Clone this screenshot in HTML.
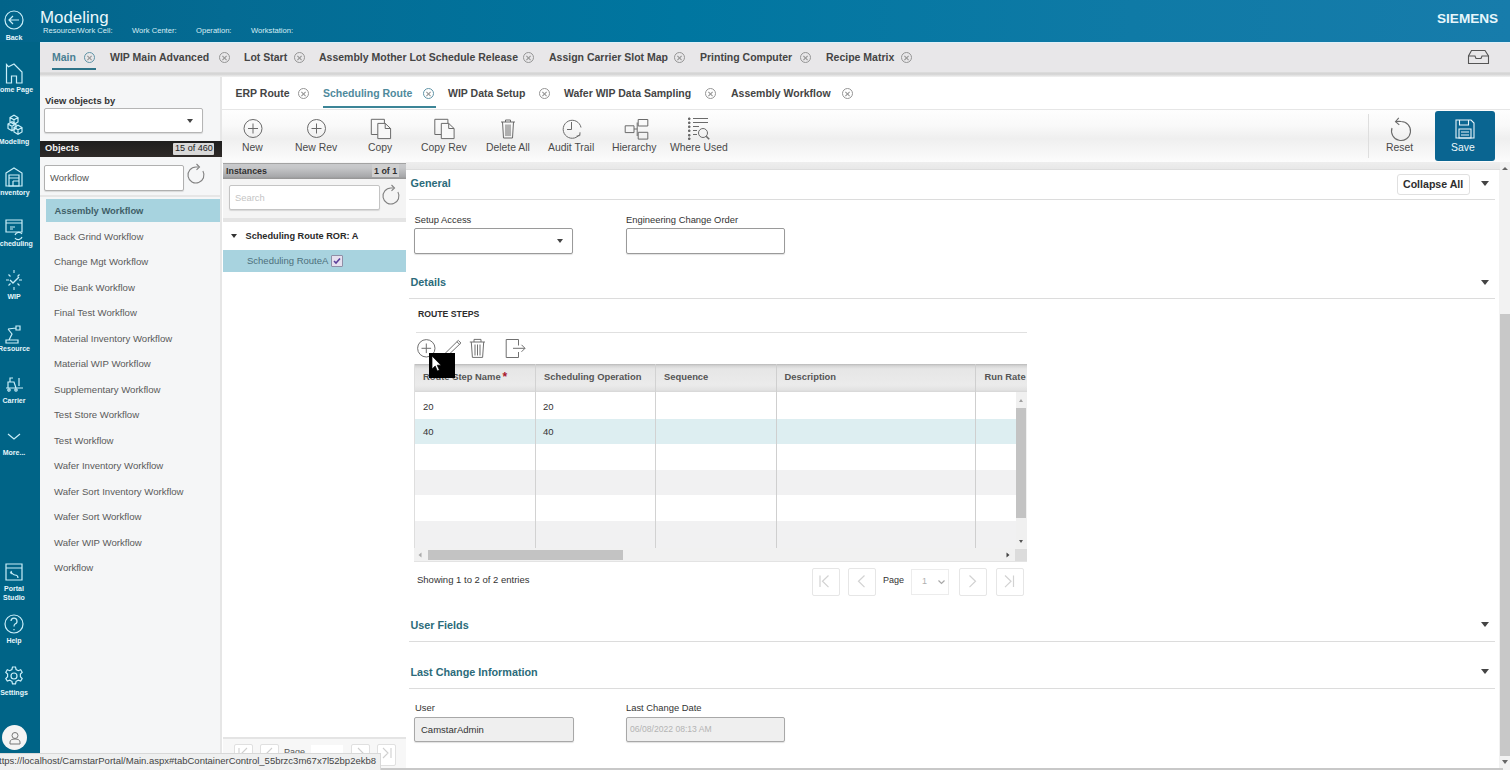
<!DOCTYPE html>
<html><head><meta charset="utf-8">
<style>
*{box-sizing:border-box;margin:0;padding:0}
html,body{width:1510px;height:770px;overflow:hidden;background:#fff;font-family:"Liberation Sans",sans-serif;color:#333}
.a{position:absolute}
.t{position:absolute;white-space:nowrap;line-height:1}
svg{position:absolute;overflow:visible}
#hdr{left:0;top:0;width:1510px;height:42px;background:linear-gradient(90deg,#02648a 0%,#046b93 15%,#0076a0 45%,#0f7aa6 75%,#177cab 100%)}
#side{left:0;top:42px;width:40px;height:728px;background:#006487}
#tabs{left:40px;top:42px;width:1470px;height:31px;background:#e8e7e9;border-top:1px solid #dff0f8}
#tabshadow{left:40px;top:72px;width:1470px;height:5px;background:linear-gradient(#dedede,#d2d2d2 40%,#f3f3f3)}
#leftp{left:40px;top:77px;width:182px;height:693px;background:#f5f6f7;border-right:2px solid #e6e6e6}
#subtabs{left:222px;top:77px;width:1288px;height:33px;background:#fff;border-bottom:1px solid #e6e6e6}
#toolbar{left:222px;top:110px;width:1288px;height:52px;background:linear-gradient(#fefefe,#f9f9f9 30%,#efefef 55%,#f6f6f6 80%,#fcfcfc)}
#instp{left:222px;top:162px;width:184px;height:608px;background:#fff}
#main{left:406px;top:162px;width:1094px;height:608px;background:#fff}
#vscroll{left:1499px;top:162px;width:11px;height:608px;background:#f2f2f2}
.st{color:#e6f6fb;font-size:7px;font-weight:bold;text-align:center;width:40px;left:-6px}
.tab{font-size:10.5px;font-weight:bold;color:#444}
.x{position:absolute;width:11px;height:11px;border:1px solid #959595;border-radius:50%}
.x:before,.x:after{content:"";position:absolute;left:4px;top:1.5px;width:1px;height:6px;background:#959595;transform:rotate(45deg)}
.x:after{transform:rotate(-45deg)}
.tl{font-size:10.4px;color:#4a4a4a}
.li{font-size:9.6px;color:#5a5a5a;left:54px}
.sec{font-size:10.8px;font-weight:bold;color:#2c6b7a}
.hl{position:absolute;height:1px;background:#dcdcdc}
.lbl{font-size:9.4px;color:#333}
.inp{position:absolute;border:1px solid #9a9a9a;border-radius:2px;background:#fff;box-shadow:0 1px 1px rgba(0,0,0,.12)}
.caret{position:absolute;width:0;height:0;border-left:4px solid transparent;border-right:4px solid transparent;border-top:4px solid #444}
.th{font-size:9.4px;font-weight:bold;color:#555}
.td{font-size:9.5px;color:#333}
.pb{position:absolute;width:28px;height:28px;border:1px solid #e6e6e6;background:#fff;border-radius:2px}
</style></head><body>
<div id="hdr" class="a"></div>
<div id="side" class="a"></div>
<div id="tabs" class="a"></div>
<div id="tabshadow" class="a"></div>
<div id="leftp" class="a"></div>
<div id="subtabs" class="a"></div>
<div id="toolbar" class="a"></div>
<div id="instp" class="a"></div>
<div id="main" class="a"></div>
<div id="vscroll" class="a"></div>

<!-- HEADER -->
<div class="t" style="left:40px;top:9.5px;font-size:16.9px;color:#eaf8fc">Modeling</div>
<div class="t" style="left:43px;top:26.5px;font-size:7.6px;color:#d8eef5">Resource/Work Cell:</div>
<div class="t" style="left:132px;top:26.5px;font-size:7.6px;color:#d8eef5">Work Center:</div>
<div class="t" style="left:196px;top:26.5px;font-size:7.6px;color:#d8eef5">Operation:</div>
<div class="t" style="left:251px;top:26.5px;font-size:7.6px;color:#d8eef5">Workstation:</div>
<div class="t" style="left:1437px;top:12px;font-size:13.6px;font-weight:bold;color:#e6f6fb">SIEMENS</div>

<!-- SIDEBAR -->

<svg style="left:0;top:0" width="40" height="770" viewBox="0 0 40 770" fill="none" stroke="#c9eef8" stroke-width="1.2">
 <!-- back -->
 <circle cx="14" cy="20" r="9"/>
 <path d="M19 20H9.5M13 16l-4 4 4 4"/>
 <!-- home -->
 <path d="M6.5 83V64.5l2 2.2L14 64l8 8v11h-5.5v-7h-5v7z"/>
 <!-- modeling cubes -->
 <path d="M10 117.5l4-2.2 4 2.2v4.5l-4 2.2-4-2.2zM10 117.5l4 2.2 4-2.2M14 119.7v4.5"/>
 <path d="M8 124l4-2.2 4 2.2v4.5l-4 2.2-4-2.2zM8 124l4 2.2 4-2.2M12 126.2v4.5"/>
 <path d="M14 127.5l4-2.2 4 2.2v4.5l-4 2.2-4-2.2zM14 127.5l4 2.2 4-2.2M18 129.7v4.5"/>
 <!-- inventory -->
 <path d="M6 173l8-5 8 5v13H6z"/>
 <path d="M9 175h10v11H9z M9 178h10M13 181h6v5M13 181v5"/>
 <!-- scheduling -->
 <path d="M6 220h16v12H6z M6 223h16"/>
 <path d="M10 227h5M10 229h3"/>
 <path d="M15 235a4 4 0 0 1 7-1M22 237a4 4 0 0 1-7 1" stroke-width="1.2"/>
 <!-- WIP -->
 <path d="M14 270v3M14 287v3M6 280h3M19 280h3M8.5 274.5l2 2M17.5 283.5l2 2M8.5 285.5l2-2M17.5 276.5l2-2" stroke-width="1.1"/>
 <path d="M10 280l3 3 6-6" stroke-width="1.4"/>
 <!-- resource robot arm -->
 <path d="M6 340h12v3H6z M9 340l3-6 -4-5 M8 329l8-1 M16 326h4v4h-4z" />
 <!-- carrier -->
 <path d="M6 388h14M8 388v-6h6l2 6M10 382v-4h3M19 386v-8M20 388h3" />
 <circle cx="9" cy="390" r="1.2"/><circle cx="16" cy="390" r="1.2"/>
 <!-- more -->
 <path d="M8 434l6 5 6-5" stroke-width="1.2"/>
 <!-- portal studio -->
 <path d="M6 564h16v16H6z M6 568h16"/>
 <path d="M10 573c2-1 3 2 5 2s3 1 3 3 M11 571l1 3" />
 <!-- help -->
 <circle cx="14" cy="624" r="9"/>
 <path d="M11 621a3 3 0 1 1 4 3c-1 .6-1 1.4-1 2.5M14 629v1.2"/>
 <!-- settings -->
 <circle cx="14" cy="676" r="3"/>
 <path d="M12.5 667h3l.6 2.5 2.2 1.2 2.4-1 1.5 2.6-1.8 1.8v2.6l1.8 1.8-1.5 2.6-2.4-1-2.2 1.2-.6 2.5h-3l-.6-2.5-2.2-1.2-2.4 1-1.5-2.6 1.8-1.8v-2.6l-1.8-1.8 1.5-2.6 2.4 1 2.2-1.2z"/>
</svg>
<div class="a" style="left:2px;top:725px;width:25px;height:25px;border-radius:50%;background:#f4f4f4"></div>
<svg style="left:2.5px;top:725.5px" width="24" height="24" viewBox="0 0 24 24" fill="none" stroke="#777" stroke-width="1"><circle cx="12" cy="9.5" r="3"/><path d="M7 18v-2c0-2 2-3 5-3s5 1 5 3v2z"/></svg>
<div class="t st" style="top:34px">Back</div>
<div class="t st" style="top:86px">Home Page</div>
<div class="t st" style="top:138px">Modeling</div>
<div class="t st" style="top:189px">Inventory</div>
<div class="t st" style="top:240px">Scheduling</div>
<div class="t st" style="top:293px">WIP</div>
<div class="t st" style="top:345px">Resource</div>
<div class="t st" style="top:397px">Carrier</div>
<div class="t st" style="top:449px">More...</div>
<div class="t st" style="top:585px">Portal</div>
<div class="t st" style="top:594px">Studio</div>
<div class="t st" style="top:637px">Help</div>
<div class="t st" style="top:689px">Settings</div>


<!-- TABS -->
<div class="t tab" style="left:52px;top:52px;color:#4a7f93">Main</div>
<div class="x" style="left:84px;top:52px;border-color:#5f93a6"></div>
<div class="a" style="left:52px;top:68px;width:44px;height:2px;background:#2f7388"></div>
<div class="t tab" style="left:110px;top:52px">WIP Main Advanced</div>
<div class="x" style="left:219px;top:52px"></div>
<div class="t tab" style="left:244px;top:52px">Lot Start</div>
<div class="x" style="left:294px;top:52px"></div>
<div class="t tab" style="left:319px;top:52px">Assembly Mother Lot Schedule Release</div>
<div class="x" style="left:523px;top:52px"></div>
<div class="t tab" style="left:549px;top:52px">Assign Carrier Slot Map</div>
<div class="x" style="left:674px;top:52px"></div>
<div class="t tab" style="left:700px;top:52px">Printing Computer</div>
<div class="x" style="left:800px;top:52px"></div>
<div class="t tab" style="left:826px;top:52px">Recipe Matrix</div>
<div class="x" style="left:901px;top:52px"></div>
<svg style="left:1460px;top:44px" width="35" height="25" viewBox="1460 44 35 25" fill="none" stroke="#555" stroke-width="1.1"><path d="M1471.5 50.5h13.5l3.5 5.5v7.5h-20V56z"/><path d="M1468.5 56h6.5l1 2.5h5l1-2.5h6.5"/></svg>

<!-- MAIN -->
<div class="a" style="left:406px;top:162px;width:1094px;height:7px;background:linear-gradient(#eeeeee,#e8e8e8)"></div><div class="a" style="left:406px;top:169px;width:1094px;height:1px;background:#dddddd"></div>
<div class="t sec" style="left:410.5px;top:178px">General</div>
<div class="hl" style="left:409px;top:199px;width:1086px"></div>
<div class="a" style="left:1397px;top:174px;width:73px;height:21px;border:1px solid #e0e0e0;border-radius:3px;background:#fff"></div>
<div class="t" style="left:1403px;top:179px;font-size:10.6px;font-weight:bold;color:#2d2d2d">Collapse All</div>
<div class="caret" style="left:1481px;top:181px;border-width:5px 4.5px 0 4.5px"></div>
<div class="t lbl" style="left:414.5px;top:214.5px">Setup Access</div>
<div class="inp" style="left:414px;top:228px;width:159px;height:25.5px"></div>
<div class="caret" style="left:557px;top:239px;border-width:4px 3.5px 0 3.5px"></div>
<div class="t lbl" style="left:626px;top:214.5px">Engineering Change Order</div>
<div class="inp" style="left:625.5px;top:228px;width:159px;height:25.5px"></div>
<div class="t sec" style="left:410.5px;top:277px">Details</div>
<div class="hl" style="left:409px;top:297.5px;width:1086px"></div>
<div class="caret" style="left:1481px;top:280px;border-width:5px 4.5px 0 4.5px"></div>
<div class="t" style="left:418px;top:309.5px;font-size:8.7px;font-weight:bold;color:#2d2d2d">ROUTE STEPS</div>
<div class="hl" style="left:416px;top:331.5px;width:611px;background:#e0e0e0"></div>

<!-- grid toolbar icons -->
<svg style="left:405px;top:330px" width="130" height="35" viewBox="405 330 130 35" fill="none" stroke="#707070" stroke-width="1">
 <circle cx="426.3" cy="348.3" r="8.7"/><path d="M426.3 343.5v9.6M421.5 348.3h9.6"/>
 <path d="M443.5 357.5l1-3.5 13.8-13.6 2.6 2.6L446.8 356.5z M457 341.8l2.6 2.6"/>
 <path d="M469.8 342h15.2M474 342v-2.6h7v2.6M471.3 342l1.1 15.4h10.2l1.1-15.4M475 344.5v11M477.5 344.5v11M480 344.5v11"/>
 <path d="M518.5 345.5v-6h-12.3v18h12.3v-5.5M513 348.3h12M521.5 344.8l3.5 3.5-3.5 3.5"/>
</svg>
<!-- table -->
<div class="a" style="left:414px;top:364px;width:613px;height:28px;background:linear-gradient(#b9b9b9,#d6d6d6 2px,#e6e6e6 5px,#ebebeb 75%,#e2e2e2 26px,#d6d6d6)"></div>
<div class="a" style="left:414px;top:392px;width:602px;height:27px;background:#fff"></div>
<div class="a" style="left:414px;top:419px;width:602px;height:25px;background:#ddeef1"></div>
<div class="a" style="left:414px;top:444px;width:602px;height:26px;background:#fff"></div>
<div class="a" style="left:414px;top:470px;width:602px;height:25px;background:#f1f1f2"></div>
<div class="a" style="left:414px;top:495px;width:602px;height:26px;background:#fff"></div>
<div class="a" style="left:414px;top:521px;width:602px;height:27px;background:#f1f1f2"></div>
<div class="a" style="left:414px;top:364px;width:1px;height:198px;background:#dedede"></div>
<div class="a" style="left:535px;top:364px;width:1px;height:184px;background:#d2d2d2"></div>
<div class="a" style="left:655px;top:364px;width:1px;height:184px;background:#d2d2d2"></div>
<div class="a" style="left:775.5px;top:364px;width:1px;height:184px;background:#cfcfcf"></div>
<div class="a" style="left:975px;top:364px;width:1px;height:184px;background:#cfcfcf"></div>
<div class="t th" style="left:423px;top:372px">Route Step Name</div>
<div class="t" style="left:502.5px;top:371px;font-size:12px;font-weight:bold;color:#a8182c">*</div>
<div class="t th" style="left:544px;top:372px">Scheduling Operation</div>
<div class="t th" style="left:664px;top:372px">Sequence</div>
<div class="t th" style="left:784.5px;top:372px">Description</div>
<div class="a" style="left:976px;top:364px;width:51px;height:28px;overflow:hidden"><div class="t th" style="left:8.5px;top:8px">Run Rate</div></div>
<div class="t td" style="left:423px;top:401.5px">20</div>
<div class="t td" style="left:543px;top:401.5px">20</div>
<div class="t td" style="left:423px;top:427px">40</div>
<div class="t td" style="left:543px;top:427px">40</div>
<!-- v scrollbar -->
<div class="a" style="left:1016px;top:392px;width:11px;height:156px;background:#f0f0f0"></div>
<div class="a" style="left:1016px;top:407.5px;width:10px;height:110px;background:#c3c3c3"></div>
<div class="caret" style="left:1018.5px;top:399px;border-width:0 2.5px 3px 2.5px;border-top:0;border-bottom:3px solid #a0a0a0"></div>
<div class="caret" style="left:1018.5px;top:539.5px;border-width:3px 2.5px 0 2.5px;border-top-color:#555"></div>
<!-- h scrollbar -->
<div class="a" style="left:414px;top:548px;width:613px;height:14px;background:#f1f1f1;border-bottom:1px solid #e3e3e3"></div>
<div class="a" style="left:428px;top:550px;width:195px;height:10px;background:#c3c3c3"></div>
<svg style="left:417px;top:551px" width="6" height="8" viewBox="0 0 6 8"><path d="M4.5 1.5L1.5 4 4.5 6.5z" fill="#aaa"/></svg>
<svg style="left:1005px;top:551px" width="6" height="8" viewBox="0 0 6 8"><path d="M1.5 1.5L4.5 4 1.5 6.5z" fill="#444"/></svg>
<div class="a" style="left:1015px;top:549px;width:12px;height:12px;background:#dcdcdc"></div>
<!-- cursor -->
<div class="a" style="left:429px;top:352.5px;width:26px;height:25px;background:#000"></div>
<svg style="left:431px;top:355px" width="14" height="18" viewBox="0 0 14 18"><path d="M1 1v13l3.2-3 2.2 5 2-1-2.2-4.8H10z" fill="#fff" stroke="#000" stroke-width=".7"/></svg>
<!-- footer -->
<div class="t" style="left:417px;top:575px;font-size:9.5px;color:#333">Showing 1 to 2 of 2 entries</div>
<div class="pb" style="left:811.5px;top:567.5px"></div>
<div class="pb" style="left:847.5px;top:567.5px"></div>
<div class="pb" style="left:959px;top:567.5px"></div>
<div class="pb" style="left:995.5px;top:567.5px"></div>
<div class="a" style="left:911px;top:568.5px;width:38px;height:26px;border:1px solid #ececec;background:#fff"></div>
<svg style="left:800px;top:560px" width="240" height="45" viewBox="800 560 240 45" fill="none" stroke="#d2d2d2" stroke-width="1.2">
 <path d="M820 575.5v11.5M828.5 575.5l-6 5.8 6 5.8"/>
 <path d="M864.5 575.5l-6 5.8 6 5.8"/>
 <path d="M969.5 575.5l6 5.8-6 5.8"/>
 <path d="M1005 575.5l6 5.8-6 5.8M1013.5 575.5v11.5"/>
 <path d="M938.5 580.5l3 3 3-3" stroke="#a8a8a8"/>
</svg>
<div class="t" style="left:883px;top:576px;font-size:9px;color:#333">Page</div>
<div class="t" style="left:922px;top:576.5px;font-size:9px;color:#b0b0b0">1</div>

<div class="t sec" style="left:410.5px;top:620px">User Fields</div>
<div class="hl" style="left:409px;top:640.5px;width:1086px"></div>
<div class="caret" style="left:1481px;top:622px;border-width:5px 4.5px 0 4.5px"></div>
<div class="t sec" style="left:410.5px;top:667px">Last Change Information</div>
<div class="hl" style="left:409px;top:688px;width:1086px"></div>
<div class="caret" style="left:1481px;top:669px;border-width:5px 4.5px 0 4.5px"></div>
<div class="t lbl" style="left:415px;top:703px">User</div>
<div class="inp" style="left:414px;top:717px;width:159.5px;height:25px;background:#efefef;border-color:#a8a8a8"></div>
<div class="t" style="left:421px;top:724.5px;font-size:9.5px;color:#333">CamstarAdmin</div>
<div class="t lbl" style="left:626px;top:703px">Last Change Date</div>
<div class="inp" style="left:625.5px;top:717px;width:159px;height:25px;background:#efefef;border-color:#a8a8a8"></div>
<div class="t" style="left:630px;top:725px;font-size:8.6px;color:#b4b4b4">06/08/2022 08:13 AM</div>

<!-- right scrollbar -->
<div class="a" style="left:1499.5px;top:314px;width:10.5px;height:442px;background:#c8c8c8"></div><div class="caret" style="left:1502px;top:760px;border-width:4px 3.5px 0 3.5px;border-top-color:#666"></div>
<div class="caret" style="left:1502px;top:167px;border-width:0 3px 3px 3px;border-top:0;border-bottom:3px solid #666"></div>


<!-- INSTANCES -->
<div class="a" style="left:222px;top:162px;width:184px;height:1px;background:#f6f6f6"></div>
<div class="a" style="left:223px;top:179px;width:183px;height:40px;background:#f4f4f4"></div><div class="a" style="left:223px;top:163px;width:183px;height:16px;background:linear-gradient(#a3a3a3 0,#a3a3a3 1px,#c9cacc 1px,#c6c7c9 30%,#a7a8aa 85%,#939393)"></div>
<div class="t" style="left:226px;top:166.5px;font-size:8.9px;font-weight:bold;color:#303030">Instances</div>
<div class="a" style="left:372px;top:164px;width:27px;height:13px;background:#d0d0d0"></div>
<div class="t" style="left:374px;top:166.5px;font-size:8.9px;font-weight:bold;color:#303030">1 of 1</div>
<div class="inp" style="left:228.5px;top:185px;width:151px;height:25px;border-color:#c4c4c4"></div>
<div class="t" style="left:235px;top:193px;font-size:9.4px;color:#c4c4c4">Search</div>
<svg style="left:378.7px;top:184px" width="24" height="24" viewBox="378.7 184 24 24" fill="none" stroke="#808080" stroke-width="1.1"><path d="M397.6 192.0A8 8 0 1 1 390.7 188h2.5"/><path d="M391.2 185l3 3-3 2.8"/></svg>
<div class="a" style="left:223px;top:218px;width:183px;height:4px;background:#e4e4e4"></div>
<div class="caret" style="left:231px;top:234px;border-width:4px 3px 0 3px;border-top-color:#333"></div>
<div class="t" style="left:245.5px;top:232px;font-size:9.2px;font-weight:bold;color:#2a2a2a">Scheduling Route ROR: A</div>
<div class="a" style="left:223px;top:249.5px;width:183px;height:22px;background:#a8d3df"></div>
<div class="t" style="left:247px;top:256px;font-size:9.5px;color:#4d6f7b">Scheduling RouteA</div>
<div class="a" style="left:331px;top:254.5px;width:12px;height:12px;background:#e6e0ef;border:1px solid #8f8fa7;border-radius:1px"></div>
<svg style="left:331px;top:254.5px" width="12" height="12" viewBox="0 0 12 12" fill="none" stroke="#5b3f9a" stroke-width="1.6"><path d="M3 6l2 2 4-4.5"/></svg>




<!-- SUBTABS -->
<div class="t tab" style="left:235.5px;top:88px">ERP Route</div>
<div class="x" style="left:297.5px;top:88px"></div>
<div class="t tab" style="left:323px;top:88px;color:#4f8a9c">Scheduling Route</div>
<div class="x" style="left:422.5px;top:88px;border-color:#5f93a6"></div>
<div class="a" style="left:323px;top:106px;width:113px;height:2px;background:#3c8597"></div>
<div class="t tab" style="left:448px;top:88px">WIP Data Setup</div>
<div class="x" style="left:538.5px;top:88px"></div>
<div class="t tab" style="left:564px;top:88px">Wafer WIP Data Sampling</div>
<div class="x" style="left:705px;top:88px"></div>
<div class="t tab" style="left:731px;top:88px">Assembly Workflow</div>
<div class="x" style="left:841.5px;top:88px"></div>

<!-- TOOLBAR -->
<svg style="left:222px;top:109px" width="520" height="50" viewBox="222 109 520 50" fill="none" stroke="#6a6a6a" stroke-width="1">
 <circle cx="253" cy="128.5" r="9"/><path d="M253 123.5v10M248 128.5h10"/>
 <circle cx="316.5" cy="128.5" r="9"/><path d="M316.5 123.5v10M311.5 128.5h10"/>
 <path d="M377.8 134.5h-6.5v-15.2h13.1v4.1"/><path d="M377.8 123.4h7.4l5.4 5.1v10.1h-12.8z" fill="#f8f8f8"/><path d="M385.2 123.4v5.1h5.4"/>
 <path d="M441.3 134.5h-6.5v-15.2h13.1v4.1"/><path d="M441.3 123.4h7.4l5.4 5.1v10.1h-12.8z" fill="#f8f8f8"/><path d="M448.7 123.4v5.1h5.4"/>
 <path d="M501 122h14M505.5 122v-2h5v2M502.5 122l1 16h9l1-16M506 124.5v11.5M508 124.5v11.5M510 124.5v11.5"/>
 <path d="M579.5 134.5A9 9 0 1 1 581 127.5"/><path d="M571.5 122v7.5h-4.5"/><path d="M576.5 136.2l3.3-.6.2-3.3"/>
 <path d="M625.2 125.8h8.8v6.8h-8.8zM638.2 119.5h9.6v6.5h-9.6zM638.2 132.3h9.6v6.8h-9.6zM634 129h3.2M637.2 122.5v13.5"/>
 <path d="M693 118.5h15M693 122.5h15M693 126.5h6M693 130.5h4M693 134.5h4" stroke-width="1"/>
 <path d="M688.5 118h1.5v1.5h-1.5zM688.5 122h1.5v1.5h-1.5zM688.5 126h1.5v1.5h-1.5zM688.5 130h1.5v1.5h-1.5zM688.5 134.5h1.5v1.5h-1.5zM688.5 138h1.5v1.5h-1.5z" fill="#666"/>
 <circle cx="703" cy="133" r="4.5"/><path d="M706.2 136.2l3 3" stroke-width="1.6"/>
</svg>
<div class="t tl" style="left:242px;top:142.5px">New</div>
<div class="t tl" style="left:295px;top:142.5px">New Rev</div>
<div class="t tl" style="left:368px;top:142.5px">Copy</div>
<div class="t tl" style="left:421px;top:142.5px">Copy Rev</div>
<div class="t tl" style="left:486px;top:142.5px">Delete All</div>
<div class="t tl" style="left:548px;top:142.5px">Audit Trail</div>
<div class="t tl" style="left:612px;top:142.5px">Hierarchy</div>
<div class="t tl" style="left:670px;top:142.5px">Where Used</div>
<div class="a" style="left:1368px;top:114px;width:1px;height:44px;background:#dedede"></div>
<svg style="left:1380px;top:110px" width="40" height="40" viewBox="1380 110 40 40" fill="none" stroke="#6a6a6a" stroke-width="1.1"><path d="M1396 121.6Q1398.5 121.3 1401 121.5A9.5 9.5 0 1 1 1392 128"/><path d="M1398.8 117.8l-3.3 3.8 3.8 3.2"/></svg>
<div class="t tl" style="left:1386px;top:142.5px">Reset</div>
<div class="a" style="left:1435px;top:110.5px;width:59.5px;height:50.5px;background:#0a6591;border-radius:3px"></div>
<svg style="left:1454px;top:118px" width="22" height="22" viewBox="0 0 22 22" fill="none" stroke="#e7f4fa" stroke-width="1.1"><path d="M2 2h15l3 3v15H2z"/><path d="M5.5 2v5h9V2M5 11h12v9H5zM7 14h8M7 17h8"/></svg>
<div class="t tl" style="left:1451px;top:142.5px;color:#eef8fc">Save</div>


<!-- LEFT PANEL -->
<div class="t" style="left:45px;top:96px;font-size:9.4px;font-weight:bold;color:#333">View objects by</div>
<div class="inp" style="left:44px;top:108px;width:159px;height:25px;border-color:#b5b5b5"></div>
<div class="caret" style="left:187px;top:119px;border-width:4px 3.5px 0 3.5px"></div>
<div class="a" style="left:40px;top:141px;width:182px;height:16px;background:linear-gradient(#1e1e1e,#2e2a28)"></div>
<div class="t" style="left:45px;top:144px;font-size:9.3px;font-weight:bold;color:#f2f2f2">Objects</div>
<div class="a" style="left:173px;top:143px;width:41px;height:12px;background:#d8d8d8;border-radius:1px"></div>
<div class="t" style="left:175px;top:144px;font-size:9.1px;color:#222">15 of 460</div>
<div class="inp" style="left:44px;top:165px;width:140px;height:26px;border-color:#b0b0b0"></div>
<div class="t" style="left:50px;top:173px;font-size:9.5px;color:#555">Workflow</div>
<svg style="left:184.4px;top:162.7px" width="24" height="24" viewBox="184.4 162.7 24 24" fill="none" stroke="#808080" stroke-width="1.1"><path d="M203.3 170.7A8 8 0 1 1 196.4 166.7h2.5"/><path d="M196.9 163.7l3 3-3 2.8"/></svg>
<div class="a" style="left:40px;top:195px;width:182px;height:2px;background:#e6e6e6"></div>
<div class="a" style="left:46px;top:199px;width:174px;height:23px;background:#a7d3df"></div>
<div class="t" style="left:54.5px;top:206px;font-size:9.4px;font-weight:bold;color:#3f5f68">Assembly Workflow</div>
<div class="t li" style="top:232px">Back Grind Workflow</div>
<div class="t li" style="top:257px">Change Mgt Workflow</div>
<div class="t li" style="top:283px">Die Bank Workflow</div>
<div class="t li" style="top:308px">Final Test Workflow</div>
<div class="t li" style="top:334px">Material Inventory Workflow</div>
<div class="t li" style="top:359px">Material WIP Workflow</div>
<div class="t li" style="top:385px">Supplementary Workflow</div>
<div class="t li" style="top:410px">Test Store Workflow</div>
<div class="t li" style="top:436px">Test Workflow</div>
<div class="t li" style="top:461px">Wafer Inventory Workflow</div>
<div class="t li" style="top:487px">Wafer Sort Inventory Workflow</div>
<div class="t li" style="top:512px">Wafer Sort Workflow</div>
<div class="t li" style="top:538px">Wafer WIP Workflow</div>
<div class="t li" style="top:563px">Workflow</div>



<!-- instance pager (partially hidden) -->
<div class="a" style="left:223px;top:737px;width:183px;height:33px;background:#f7f7f7;border-top:2px solid #e4e4e4"></div>
<div class="pb" style="left:234px;top:744px;width:19px;height:22px;border-color:#e0e0e0"></div>
<div class="pb" style="left:259.5px;top:744px;width:19px;height:22px;border-color:#e0e0e0"></div>
<div class="pb" style="left:351px;top:744px;width:19px;height:22px;border-color:#e0e0e0"></div>
<div class="pb" style="left:376.5px;top:744px;width:19px;height:22px;border-color:#e0e0e0"></div>
<div class="a" style="left:311px;top:745px;width:32px;height:20px;background:#fff"></div>
<div class="t" style="left:284px;top:748px;font-size:9px;color:#555">Page</div>
<svg style="left:230px;top:740px" width="170" height="30" viewBox="230 740 170 30" fill="none" stroke="#cfcfcf" stroke-width="1.1"><path d="M239 748v10M247 748l-5 5 5 5M272 748l-5 5 5 5M358 748l5 5-5 5M383 748l5 5-5 5M391 748v10"/></svg>
<!-- STATUS BAR -->
<div class="a" style="left:0;top:752.5px;width:381px;height:18px;background:#eff0f0;border-top:1px solid #d8d8d8;border-right:1px solid #d8d8d8"></div>
<div class="t" style="left:-1px;top:756px;font-size:9.5px;color:#444">ttps://localhost/CamstarPortal/Main.aspx#tabContainerControl_55brzc3m67x7l52bp2ekb8</div>
<div class="a" style="left:381px;top:768px;width:1122px;height:2px;background:#c8c8c8"></div>
</body></html>
